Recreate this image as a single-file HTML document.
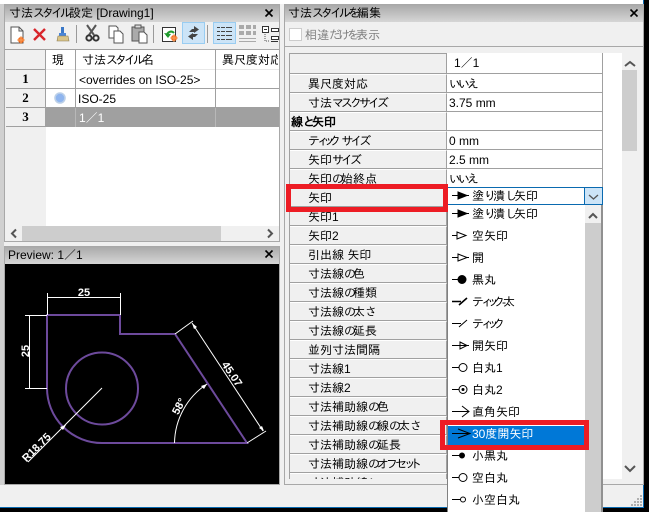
<!DOCTYPE html>
<html><head><meta charset="utf-8">
<style>
html,body{margin:0;padding:0;width:649px;height:512px;overflow:hidden;background:#000}
*{box-sizing:border-box}
body{font:12px/14px "Liberation Sans","IPAGothic","Noto Sans CJK JP",sans-serif;color:#000}
i{font-style:normal;letter-spacing:-3px}
u{text-decoration:none;letter-spacing:-6px}
.a{position:absolute}
.t{position:absolute;white-space:nowrap;line-height:14px}
.title{background:linear-gradient(#aaaaaa,#d6d6d6)}
.lab{position:absolute;left:290px;width:157px;height:19px;background:#f0f0f0;border-top:1px solid #fff;border-bottom:1px solid #a0a0a0;border-right:1px solid #a0a0a0;padding-left:18px;line-height:19px;white-space:nowrap;overflow:hidden}
.val{position:absolute;left:447px;width:156px;height:19px;background:#fff;border-bottom:1px solid #a0a0a0;border-right:1px solid #a0a0a0;padding-left:2px;line-height:20px;white-space:nowrap;overflow:hidden}
.item{position:absolute;left:472px;white-space:nowrap;line-height:14px}
.rh{position:absolute;left:6px;width:40px;background:#f0f0f0;border-bottom:1px solid #a0a0a0;border-right:1px solid #a0a0a0;text-align:center;font:bold 13px/18px "Liberation Serif",serif}
.x{position:absolute;width:10px;height:10px}
</style></head><body>
<div class="a" style="left:0;top:0;width:649px;height:512px;background:#f0f0f0"></div>
<div class="a" style="left:0;top:0;width:644px;height:4px;background:#fff"></div>
<div class="a" style="left:643px;top:0;width:1px;height:508px;background:#0a6ab0"></div>
<div class="a" style="left:644px;top:0;width:5px;height:512px;background:#000"></div>
<div class="a" style="left:0;top:507px;width:644px;height:1px;background:#0a6ab0"></div>
<div class="a" style="left:0;top:508px;width:649px;height:4px;background:#000"></div>
<div class="a" style="left:0;top:4px;width:4px;height:481px;background:#d0d0d0"></div>
<div class="a" style="left:280px;top:4px;width:4px;height:481px;background:#f0f0f0"></div>

<!-- left panel -->
<div class="a" style="left:4px;top:4px;width:276px;height:238px;background:#f0f0f0;border:1px solid #a8a8a8"></div>
<div class="a title" style="left:5px;top:5px;width:274px;height:17px"></div>
<div class="t" style="left:9px;top:6px">寸法<i>スタイル</i>設定 [Drawing1]</div>
<svg class="x" style="left:264px;top:8px"><path d="M1.500 1.500l7 7M8.500 1.500l-7 7" stroke="#000" stroke-width="1.600"/></svg>

<svg class="a" style="left:0;top:20px" width="285" height="30" viewBox="0 20 285 30">
<path d="M11 27h8l4 4v12H11z" fill="#fff" stroke="#555"/><path d="M19 27v4h4" fill="none" stroke="#555"/>
<circle cx="21" cy="40" r="3" fill="#f26a1b"/><path d="M17 40h8M21 36v8" stroke="#f9a15e"/>
<path d="M34 29l11 11M45 29L34 40" stroke="#d8252b" stroke-width="2.400"/>
<path d="M61 27h3v6h-3z" fill="#3a78c8"/><path d="M59 33h7v3h-7z" fill="#4a86d8"/><path d="M58 36h10l1 5H57z" fill="#d9c48a" stroke="#8a7a50" stroke-width=".6"/>
<rect x="76" y="25" width="1" height="18" fill="#9a9a9a"/>
<path d="M96 25l-7 10M87 25l7 10" stroke="#555" stroke-width="2"/><circle cx="89" cy="38" r="2.600" fill="none" stroke="#333" stroke-width="2"/><circle cx="96" cy="38" r="2.600" fill="none" stroke="#333" stroke-width="2"/>
<path d="M109 26h7l2 2v3h-4v7h-5z" fill="#fff" stroke="#555"/><path d="M114 31h6l3 3v9h-9z" fill="#fff" stroke="#555"/>
<rect x="132" y="27" width="12" height="14" fill="#aaa" stroke="#555"/><rect x="135" y="25" width="6" height="3" fill="#ddd" stroke="#555"/><path d="M139 32h5l3 3v8h-8z" fill="#fff" stroke="#555"/>
<rect x="153" y="25" width="1" height="18" fill="#9a9a9a"/>
<rect x="162.500" y="27.500" width="13" height="14" fill="#fff" stroke="#333"/>
<path d="M167 36a4 4 0 0 1 7-3" fill="none" stroke="#1f9a2c" stroke-width="2"/><path d="M164 33l4 5 3-4z" fill="#1f9a2c"/>
<circle cx="174" cy="38" r="3" fill="#f26a1b"/><path d="M170 38h8M174 34v8" stroke="#f9a15e"/>
<rect x="182.500" y="22.500" width="22" height="21" fill="#cce4f7" stroke="#99cdf2"/>
<path d="M189 32l3-3h2v-3l5 3.500-5 3.500v-1zM198 34l-3 3h-2v3l-5-3.500 5-3.500v1z" fill="#444"/>
<rect x="207" y="25" width="1" height="18" fill="#9a9a9a"/>
<rect x="213.500" y="22.500" width="22" height="21" fill="#cce4f7" stroke="#99cdf2"/>
<path d="M217 27.500h3m1 0h4m1 0h6M217 31.500h3m1 0h4m1 0h6M217 35.500h3m1 0h4m1 0h6M217 39.500h3m1 0h4m1 0h6" stroke="#444"/>
<path d="M239 25h5v4h-5zM246 25h5v4h-5zM253 25h3v4h-3zM239 31h5v4h-5zM246 31h5v4h-5zM253 31h3v4h-3z" fill="#aaa"/>
<path d="M239 38.500h17M239 41.500h17" stroke="#aaa"/>
<rect x="262.500" y="26.500" width="6" height="6" fill="#fff" stroke="#333"/><path d="M264 29.500h3" stroke="#333"/>
<path d="M271.500 28.500h7v3h-7zM271.500 36.500h7v3h-7z" fill="#fff" stroke="#333"/><path d="M271 41.500h7" stroke="#333"/>
<path d="M265 34v7h5" fill="none" stroke="#555" stroke-dasharray="1 1"/>
</svg>

<!-- grid left -->
<div class="a" style="left:5px;top:49px;width:274px;height:177px;background:#fff"></div>
<div class="a" style="left:5px;top:49px;width:41px;height:177px;background:#f0f0f0"></div>
<div class="a" style="left:5px;top:49px;width:274px;height:1px;background:#a0a0a0"></div>
<div class="a" style="left:6px;top:50px;width:40px;height:20px;background:#f0f0f0;border-right:1px solid #a0a0a0;border-bottom:1px solid #a0a0a0"></div>
<div class="rh" style="top:70px;height:19px">1</div>
<div class="rh" style="top:89px;height:19px">2</div>
<div class="rh" style="top:108px;height:19px">3</div>
<div class="a" style="left:46px;top:88px;width:233px;height:1px;background:#a0a0a0"></div>
<div class="a" style="left:46px;top:107px;width:233px;height:1px;background:#a0a0a0"></div>
<div class="a" style="left:46px;top:69px;width:233px;height:1px;background:#e8e8e8"></div>
<div class="a" style="left:75px;top:50px;width:1px;height:58px;background:#a0a0a0"></div>
<div class="a" style="left:215px;top:50px;width:1px;height:58px;background:#a0a0a0"></div>
<div class="a" style="left:46px;top:108px;width:233px;height:19px;background:#a0a0a0"></div>
<div class="a" style="left:75px;top:108px;width:1px;height:19px;background:#b8b8b8"></div>
<div class="a" style="left:215px;top:108px;width:1px;height:19px;background:#b8b8b8"></div>
<div class="t" style="left:52px;top:53px">現</div>
<div class="t" style="left:82px;top:53px">寸法<i>スタイル</i>名</div>
<div class="t" style="left:222px;top:53px;width:56px;overflow:hidden">異尺度対応</div>
<div class="t" style="left:79px;top:73px">&lt;overrides on ISO-25&gt;</div>
<svg class="a" style="left:53px;top:91px" width="14" height="14"><circle cx="7" cy="7" r="5" fill="#8fb5ee" stroke="#bcd0e8" stroke-width="1.600"/></svg>
<div class="t" style="left:78px;top:92px">ISO-25</div>
<div class="t" style="left:79px;top:111px;color:#fff">1／1</div>

<!-- left scrollbar -->
<div class="a" style="left:5px;top:226px;width:274px;height:15px;background:#f0f0f0"></div>
<div class="a" style="left:22px;top:226px;width:199px;height:15px;background:#cdcdcd"></div>
<svg class="a" style="left:5px;top:226px" width="274" height="15"><path d="M11 3.500l-4 4 4 4" fill="none" stroke="#555" stroke-width="2"/><path d="M263 3.500l4 4-4 4" fill="none" stroke="#555" stroke-width="2"/></svg>

<!-- preview -->
<div class="a" style="left:4px;top:246px;width:276px;height:239px;border:1px solid #a8a8a8;background:#000"></div>
<div class="a title" style="left:5px;top:247px;width:274px;height:17px"></div>
<div class="t" style="left:8px;top:248px">Preview: 1／1</div>
<svg class="x" style="left:264px;top:249px"><path d="M1.500 1.500l7 7M8.500 1.500l-7 7" stroke="#000" stroke-width="1.600"/></svg>
<svg class="a" style="left:5px;top:264px" width="274" height="220" viewBox="5 264 274 220">
<g fill="none" stroke="#6d4a9c" stroke-width="2">
<path d="M47 315H120V334H175L247 443H102A55 55 0 0 1 47 388Z"/>
<circle cx="102" cy="388.500" r="36"/>
</g>
<g fill="none" stroke="#fff" stroke-width="1" shape-rendering="crispEdges">
<path d="M47.500 293V315M120.500 293V315M47 297.500H120M25 315.500H47M25 388.500H47M29.500 315V388"/>
</g>
<g fill="none" stroke="#fff" stroke-width="1">
<path d="M175 334L193 321M247 443L266 431M192 323L263 431M102 388L28 462"/>
<path d="M174.500 443A72 72 0 0 1 207 384"/>
</g>
<path d="M264 431l-5-3 3-2zM192 323l5 4-3 2zM207 384l-6 2 3 3zM66 425l-6 2 3 3z" fill="#fff"/>
<g fill="#fff" font-family="Liberation Sans" font-weight="bold" font-size="11" text-anchor="middle">
<text x="84" y="296">25</text>
<text transform="translate(29,351) rotate(-90)">25</text>
<text transform="translate(229,376) rotate(56)">45.07</text>
<text transform="translate(182,408) rotate(-62)">58°</text>
<text transform="translate(39,450) rotate(-45)">R18.75</text>
</g>
</svg>

<!-- right panel -->
<div class="a" style="left:284px;top:4px;width:360px;height:481px;border:1px solid #a8a8a8;background:#f0f0f0"></div>
<div class="a title" style="left:285px;top:5px;width:358px;height:17px"></div>
<div class="t" style="left:288px;top:6px">寸法<i>スタイルを</i>編集</div>
<svg class="x" style="left:629px;top:8px"><path d="M1.500 1.500l7 7M8.500 1.500l-7 7" stroke="#000" stroke-width="1.600"/></svg>
<div class="a" style="left:289px;top:28px;width:13px;height:13px;background:#fff;border:1px solid #ccc"></div>
<div class="t" style="left:305px;top:28px;color:#7f7f7f">相違<i>だけを</i>表示</div>
<div class="a" style="left:284px;top:46px;width:360px;height:1px;background:#a8a8a8"></div>

<div class="a" style="left:290px;top:53px;width:332px;height:426px;background:#fff"></div>
<div class="a" style="left:622px;top:53px;width:21px;height:431px;background:#f0f0f0"></div>
<div class="a" style="left:622px;top:70px;width:15px;height:81px;background:#cdcdcd"></div>
<svg class="a" style="left:622px;top:56px" width="16" height="420"><path d="M3 10l5-4 5 4" fill="none" stroke="#555" stroke-width="2"/><path d="M3 410l5 5 5-5" fill="none" stroke="#555" stroke-width="2"/></svg>
<svg class="a" style="left:631px;top:495px" width="12" height="12" fill="#b0b0b0"><rect x="9" y="0" width="2" height="2"/><rect x="6" y="3" width="2" height="2"/><rect x="9" y="3" width="2" height="2"/><rect x="3" y="6" width="2" height="2"/><rect x="6" y="6" width="2" height="2"/><rect x="9" y="6" width="2" height="2"/><rect x="0" y="9" width="2" height="2"/><rect x="3" y="9" width="2" height="2"/><rect x="6" y="9" width="2" height="2"/><rect x="9" y="9" width="2" height="2"/></svg>

<div class="a" style="left:289px;top:53px;width:1px;height:426px;background:#a0a0a0"></div>
<div class="lab" style="top:53px;height:21px;border-top:1px solid #a0a0a0"></div>
<div class="val" style="top:53px;height:21px"><span style="margin-left:5px">1／1</span></div>
<div class="lab" style="top:74px">異尺度対応</div><div class="val" style="top:74px"><i>いいえ</i></div>
<div class="lab" style="top:93px">寸法<i>マスクサイズ</i></div><div class="val" style="top:93px">3.75 mm</div>
<div class="lab" style="top:112px;padding-left:1px;font-weight:bold">線<i>と</i>矢印</div><div class="val" style="top:112px"></div>
<div class="lab" style="top:131px"><i>テ</i><u>ィッ</u><i>ク</i> <i>サイズ</i></div><div class="val" style="top:131px">0 mm</div>
<div class="lab" style="top:150px">矢印<i>サイズ</i></div><div class="val" style="top:150px">2.5 mm</div>
<div class="lab" style="top:169px">矢印<i>の</i>始終点</div><div class="val" style="top:169px"><i>いいえ</i></div>
<div class="lab" style="top:188px">矢印</div>
<div class="lab" style="top:207px">矢印1</div>
<div class="lab" style="top:226px">矢印2</div>
<div class="lab" style="top:245px">引出線 矢印</div>
<div class="lab" style="top:264px">寸法線<i>の</i>色</div>
<div class="lab" style="top:283px">寸法線<i>の</i>種類</div>
<div class="lab" style="top:302px">寸法線<i>の</i>太<i>さ</i></div>
<div class="lab" style="top:321px">寸法線<i>の</i>延長</div>
<div class="lab" style="top:340px">並列寸法間隔</div>
<div class="lab" style="top:359px">寸法線1</div>
<div class="lab" style="top:378px">寸法線2</div>
<div class="lab" style="top:397px">寸法補助線<i>の</i>色</div>
<div class="lab" style="top:416px">寸法補助線<i>の</i>線<i>の</i>太<i>さ</i></div>
<div class="lab" style="top:435px">寸法補助線<i>の</i>延長</div>
<div class="lab" style="top:454px">寸法補助線<i>のオフセ</i><u>ッ</u><i>ト</i></div>
<div class="lab" style="top:473px;height:6px;border-bottom:0">寸法補助線1</div>

<!-- combo + popup -->
<div class="a" style="left:447px;top:187px;width:156px;height:18px;background:#fff;border:1px solid #0a6ab0"></div>
<div class="a" style="left:584px;top:187px;width:19px;height:18px;background:#cce4f7;border:1px solid #0a6ab0"></div>
<svg class="a" style="left:587px;top:192px" width="13" height="10"><path d="M2 3l4.500 4 4.500-4" fill="none" stroke="#555" stroke-width="1.300"/></svg>
<div class="a" style="left:447px;top:205px;width:156px;height:307px;background:#fff;border-left:1px solid #808080;border-right:2px solid #909090"></div>
<div class="a" style="left:585px;top:205px;width:16px;height:307px;background:#f0f0f0"></div>
<div class="a" style="left:585px;top:223px;width:16px;height:289px;background:#cdcdcd"></div>
<svg class="a" style="left:585px;top:210px" width="16" height="10"><path d="M4 8l4-4 4 4" fill="none" stroke="#555" stroke-width="2"/></svg>
<div class="a" style="left:448px;top:426px;width:136px;height:19px;background:#0078d7"></div>

<svg class="a" style="left:447px;top:187px" width="30" height="325" viewBox="447 187 30 325" fill="none" stroke="#000" stroke-width="1">
<path d="M452 195.500h17"/><path d="M458 192l9 3.500-9 3.500z" fill="#000"/>
<path d="M452 213.500h17"/><path d="M458 210l9 3.500-9 3.500z" fill="#000"/>
<path d="M452 235.500h5"/><path d="M457 232l9 3.500-9 3.500z" fill="#fff"/>
<path d="M452 257.500h17"/><path d="M458 254l9 3.500-9 3.500z" fill="#fff"/>
<path d="M452 279.500h7"/><circle cx="462" cy="279.500" r="4" fill="#000"/>
<path d="M452 301.500h9M459 305l8-7" stroke-width="1.600"/>
<path d="M452 323.500h9M459 327l8-7"/>
<path d="M452 345.500h17M460 342l7 3.500-7 3.500z" fill="#fff"/>
<path d="M452 367.500h7"/><circle cx="463" cy="367.500" r="4"/>
<path d="M452 389.500h7"/><circle cx="463" cy="389.500" r="4"/><circle cx="463" cy="389.500" r="1" fill="#000"/>
<path d="M452 411.500h17M462 406l7 5.500-7 5.500"/>
<path d="M452 433.500h18M458 429l12 4.500-12 4.500"/>
<path d="M452 455.500h8"/><circle cx="462" cy="455.500" r="2.500" fill="#000"/>
<path d="M452 477.500h7"/><circle cx="463" cy="477.500" r="4"/>
<path d="M452 499.500h9"/><circle cx="463" cy="499.500" r="2.500"/>
</svg>
<div class="item" style="top:189px">塗<i>り</i>潰<i>し</i>矢印</div>
<div class="item" style="top:207px">塗<i>り</i>潰<i>し</i>矢印</div>
<div class="item" style="top:229px">空矢印</div>
<div class="item" style="top:251px">開</div>
<div class="item" style="top:273px">黒丸</div>
<div class="item" style="top:295px"><i>テ</i><u>ィッ</u><i>ク-</i>太</div>
<div class="item" style="top:317px"><i>テ</i><u>ィッ</u><i>ク</i></div>
<div class="item" style="top:339px">開矢印</div>
<div class="item" style="top:361px">白丸1</div>
<div class="item" style="top:383px">白丸2</div>
<div class="item" style="top:405px">直角矢印</div>
<div class="item" style="top:427px;color:#fff">30度開矢印</div>
<div class="item" style="top:449px">小黒丸</div>
<div class="item" style="top:471px">空白丸</div>
<div class="item" style="top:493px">小空白丸</div>

<!-- red highlights -->
<div class="a" style="left:286px;top:184px;width:162px;height:28px;border:5px solid #ed1c24"></div>
<div class="a" style="left:440px;top:420px;width:149px;height:30px;border:5px solid #ed1c24"></div>
</body></html>
